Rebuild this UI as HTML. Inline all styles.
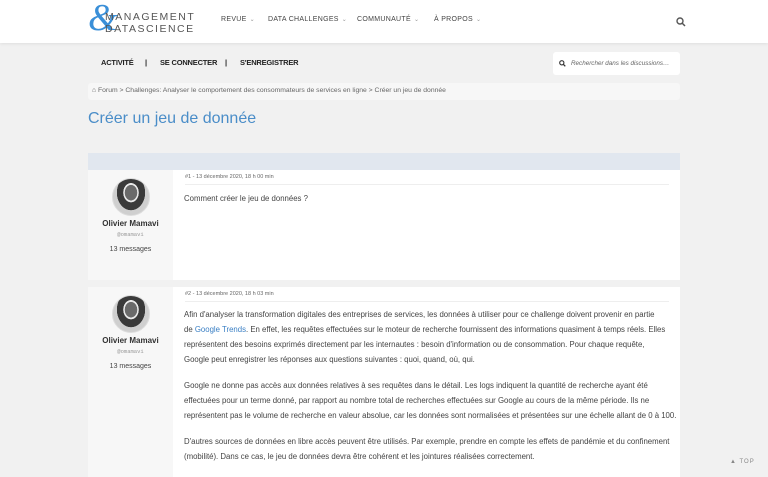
<!DOCTYPE html>
<html><head><meta charset="utf-8"><style>
*{margin:0;padding:0;box-sizing:border-box}
body{width:768px;height:474px;overflow:hidden;background:#f1f1f1;font-family:"Liberation Sans",sans-serif;color:#444;position:relative}
.hdr{position:absolute;left:0;top:0;width:768px;height:43px;background:#fff;box-shadow:0 1px 3px rgba(0,0,0,.08)}
.logo{position:absolute;left:90px;top:8px}
.amp{position:absolute;left:-2px;top:-9px;font:italic 38px "Liberation Serif",serif;color:#3a8fd8;line-height:38px}
.lt{position:absolute;left:15px;top:4px;font-size:10.5px;letter-spacing:1.5px;color:#555;line-height:11px;white-space:nowrap}
.nav{position:absolute;top:16px;font-size:7px;color:#444;letter-spacing:.3px;white-space:nowrap}
.nav i{font-style:normal;color:#999;font-size:6px;margin-left:3px}
.sub{position:absolute;top:58px;font-size:7.5px;font-weight:bold;color:#222;white-space:nowrap;letter-spacing:-.2px}
.search{position:absolute;left:553px;top:52px;width:127px;height:23px;background:#fff;border-radius:3px;font-size:6.3px;font-style:italic;color:#666;padding:8px 0 0 18px;white-space:nowrap}
.bc{position:absolute;left:88px;top:83px;width:592px;height:17px;background:#f7f7f7;border-radius:3px;font-size:6.8px;color:#666;padding:4px 0 0 4px;white-space:nowrap}
h1{position:absolute;left:88px;top:110px;font-weight:normal;font-size:16px;color:#4a8dc8}
.bar{position:absolute;left:88px;top:153px;width:592px;height:17px;background:#e1e7ef}
.post{position:absolute;left:88px;width:592px;background:#fff}
.side{position:absolute;left:0;top:0;width:85px;height:100%;background:#f7f7f7;text-align:center}
.av{width:38px;height:38px;border-radius:50%;background:radial-gradient(ellipse at 50% 38%,#6a6a6a 0 24%,#e8e8e8 25% 30%,#3a3a3a 31% 55%,#cfcfcf 56%);margin:8px auto 3px;border:1px solid #ddd}
.nm{font-size:8px;font-weight:bold;color:#333}
.hd{font-size:5.5px;color:#999;margin-top:3px;font-family:"Liberation Mono",monospace}
.ms{font-size:7px;color:#444;margin-top:8px}
.meta{position:absolute;left:97px;top:4px;width:484px;border-bottom:1px solid #eee;padding-bottom:4px;font-size:5.5px;color:#666}
.txt{position:absolute;left:96px;top:22px;width:495px;font-size:7.8px;line-height:15px;color:#444;white-space:nowrap}
.txt p{margin-bottom:11px}
a{color:#3a7fc4;text-decoration:none}
</style></head><body>
<div class="hdr">
<div class="logo"><span class="amp">&amp;</span><div class="lt">MANAGEMENT<br><span style="display:inline-block;margin-top:1px">DATASCIENCE</span></div></div>
<div class="nav" style="left:221px">REVUE<i>&#8964;</i></div>
<div class="nav" style="left:268px">DATA CHALLENGES<i>&#8964;</i></div>
<div class="nav" style="left:357px">COMMUNAUTÉ<i>&#8964;</i></div>
<div class="nav" style="left:434px">À PROPOS<i>&#8964;</i></div>
<svg style="position:absolute;left:676px;top:17px" width="10" height="10" viewBox="0 0 10 10"><circle cx="4" cy="4" r="3" fill="none" stroke="#555" stroke-width="1.4"/><path d="M6 6L9 9" stroke="#555" stroke-width="1.5"/></svg>
</div>
<div class="sub" style="left:101px">ACTIVITÉ</div>
<div class="sub" style="left:145px">|</div>
<div class="sub" style="left:160px">SE CONNECTER</div>
<div class="sub" style="left:225px">|</div>
<div class="sub" style="left:240px">S'ENREGISTRER</div>
<div class="search"><svg style="position:absolute;left:6px;top:8px" width="7" height="7" viewBox="0 0 10 10"><circle cx="4" cy="4" r="3" fill="none" stroke="#333" stroke-width="1.6"/><path d="M6 6L9 9" stroke="#333" stroke-width="1.8"/></svg>Rechercher dans les discussions…</div>
<div class="bc">&#8962; Forum &gt; Challenges: Analyser le comportement des consommateurs de services en ligne &gt; Créer un jeu de donnée</div>
<h1>Créer un jeu de donnée</h1>
<div class="bar"></div>
<div class="post" style="top:170px;height:110px">
<div class="side"><div class="av"></div><div class="nm">Olivier Mamavi</div><div class="hd">@omamavi</div><div class="ms">13 messages</div></div>
<div class="meta">#1 - 13 décembre 2020, 18 h 00 min</div>
<div class="txt" style="top:21px">Comment créer le jeu de données ?</div>
</div>
<div class="post" style="top:287px;height:190px">
<div class="side"><div class="av"></div><div class="nm">Olivier Mamavi</div><div class="hd">@omamavi</div><div class="ms">13 messages</div></div>
<div class="meta">#2 - 13 décembre 2020, 18 h 03 min</div>
<div class="txt" style="top:20px">
<p>Afin d'analyser la transformation digitales des entreprises de services, les données à utiliser pour ce challenge doivent provenir en partie<br>de <a>Google Trends</a>. En effet, les requêtes effectuées sur le moteur de recherche fournissent des informations quasiment à temps réels. Elles<br>représentent des besoins exprimés directement par les internautes : besoin d'information ou de consommation. Pour chaque requête,<br>Google peut enregistrer les réponses aux questions suivantes : quoi, quand, où, qui.</p>
<p>Google ne donne pas accès aux données relatives à ses requêtes dans le détail. Les logs indiquent la quantité de recherche ayant été<br>effectuées pour un terme donné, par rapport au nombre total de recherches effectuées sur Google au cours de la même période. Ils ne<br>représentent pas le volume de recherche en valeur absolue, car les données sont normalisées et présentées sur une échelle allant de 0 à 100.</p>
<p>D'autres sources de données en libre accès peuvent être utilisés. Par exemple, prendre en compte les effets de pandémie et du confinement<br>(mobilité). Dans ce cas, le jeu de données devra être cohérent et les jointures réalisées correctement.</p>
</div></div>
<div style="position:absolute;left:730px;top:459px;font-size:6px;color:#888;letter-spacing:1px">▲ TOP</div>
</body></html>
